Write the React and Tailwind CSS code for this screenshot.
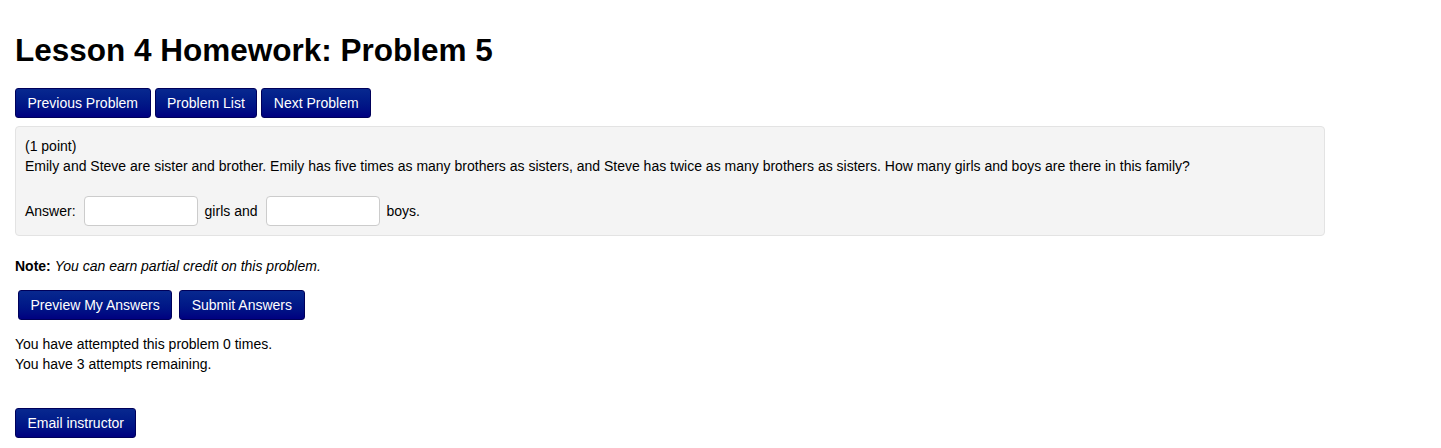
import React from "react";

function Btn({ children, className = "" }) {
  return (
    <button
      className={
        "h-[30px] px-[11.5px] rounded-[3px] border border-[#00005a] bg-gradient-to-b from-[#08288f] to-[#000080] text-white text-[14px] leading-none " +
        className
      }
    >
      {children}
    </button>
  );
}

export default function App() {
  return (
    <div className="w-full min-h-[448px] bg-white text-black px-[15px] pt-[31px] font-['Liberation_Sans',Arial,sans-serif] text-[14px] leading-[20px]">
      <h1 className="text-[31.5px] leading-[38px] font-bold">Lesson 4 Homework: Problem 5</h1>
      <div className="mt-[19px] flex gap-[4px]">
        <Btn>Previous Problem</Btn>
        <Btn>Problem List</Btn>
        <Btn>Next Problem</Btn>
      </div>

      {/* problem box */}
      <div className="mt-[8px] w-[1310px] bg-[#f4f4f4] border border-[#e3e3e3] rounded-[4px] px-[9px] pt-[9px] pb-[9px]">
        <div>(1 point)</div>
        <div>
          Emily and Steve are sister and brother. Emily has five times as many brothers as sisters, and Steve has twice as many brothers as sisters. How many girls and boys are there in this family?
        </div>
        <div className="mt-[20px] flex items-center">
          <span>Answer:</span>
          <input className="ml-[8px] w-[114px] h-[30px] bg-white border border-[#cccccc] rounded-[4px]" />
          <span className="ml-[7px]">girls and</span>
          <input className="ml-[8px] w-[114px] h-[30px] bg-white border border-[#cccccc] rounded-[4px]" />
          <span className="ml-[7px]">boys.</span>
        </div>
      </div>

      <div className="mt-[20px]">
        <b>Note:</b> <i>You can earn partial credit on this problem.</i>
      </div>
      <div className="mt-[14px] ml-[3px] flex gap-[7px]">
        <Btn>Preview My Answers</Btn>
        <Btn>Submit Answers</Btn>
      </div>
      <div className="mt-[14px]">
        <div>You have attempted this problem 0 times.</div>
        <div>You have 3 attempts remaining.</div>
      </div>
      <div className="mt-[34px]">
        <Btn>Email instructor</Btn>
      </div>
    </div>
  );
}
